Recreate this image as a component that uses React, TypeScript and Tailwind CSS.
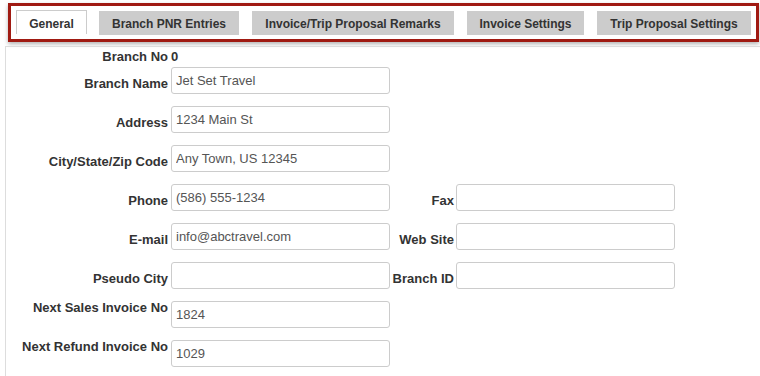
const tabs = [
  { label: 'General', w: 'w-[71px]', active: true },
  { label: 'Branch PNR Entries', w: 'w-[140px]' },
  { label: 'Invoice/Trip Proposal Remarks', w: 'w-[202px]' },
  { label: 'Invoice Settings', w: 'w-[117px]' },
  { label: 'Trip Proposal Settings', w: 'w-[154px]' },
];

function Field({ value }: { value?: string }) {
  return (
    <input
      readOnly
      value={value ?? ''}
      className="h-[27px] w-[219px] rounded-[3px] border border-[#cccccc] bg-white px-[4px] text-[13px] text-[#555555] outline-none"
    />
  );
}

function Row({
  label,
  value,
  right,
  top,
}: {
  label: string;
  value?: string;
  right?: string;
  top?: boolean;
}) {
  const align = top ? 'items-start' : 'items-end';
  return (
    <div className={`flex ${align}`}>
      <label className={`w-[162px] text-right text-[13px] font-bold leading-[14px] text-[#333333] ${top ? '' : 'mb-[3px]'}`}>
        {label}
      </label>
      <div className="ml-[3px]">
        <Field value={value} />
      </div>
      {right && (
        <>
          <label className="mb-[3px] w-[64px] text-right text-[13px] font-bold leading-[14px] text-[#333333]">
            {right}
          </label>
          <div className="ml-[2px]">
            <Field />
          </div>
        </>
      )}
    </div>
  );
}

export default function App() {
  return (
    <div className="h-[376px] w-[760px] overflow-hidden bg-white font-['Liberation_Sans',Arial,sans-serif]">
      {/* tab strip */}
      <div className="ml-[8px] mr-[1px] mt-[3px] h-[39px] border-[3px] border-[#a01a12] bg-white shadow-[0_2px_4px_rgba(0,0,0,0.3)]">
        <div className="flex pl-[5px] pt-[4px]">
          {tabs.map((t, i) => (
            <div
              key={t.label}
              className={`${t.w} h-[24px] pt-[6px] text-center text-[12px] font-bold leading-[14px] text-[#333333] ${
                i > 0 ? 'ml-[12px] mt-[1px] h-[23px] bg-[#cccccc]' : 'border-x border-t border-[#cccccc] bg-white'
              } ${i > 1 ? 'ml-[13px]' : ''}`}
            >
              {t.label}
            </div>
          ))}
        </div>
      </div>

      {/* form panel */}
      <div className="ml-[5px] mt-[4px] h-[400px] border-l border-t border-[#dddddd] pt-[3px]">
        <div className="flex text-[13px] font-bold leading-[14px] text-[#333333]">
          <span className="w-[162px] text-right">Branch No</span>
          <span className="ml-[3px]">0</span>
        </div>
        <div className="mt-[3px] flex flex-col gap-[12px]">
          <Row label="Branch Name" value="Jet Set Travel" />
          <Row label="Address" value="1234 Main St" />
          <Row label="City/State/Zip Code" value="Any Town, US 12345" />
          <Row label="Phone" value="(586) 555-1234" right="Fax" />
          <Row label="E-mail" value="info@abctravel.com" right="Web Site" />
          <Row label="Pseudo City" right="Branch ID" />
          <Row label="Next Sales Invoice No" value="1824" top />
          <Row label="Next Refund Invoice No" value="1029" top />
        </div>
      </div>
    </div>
  );
}
